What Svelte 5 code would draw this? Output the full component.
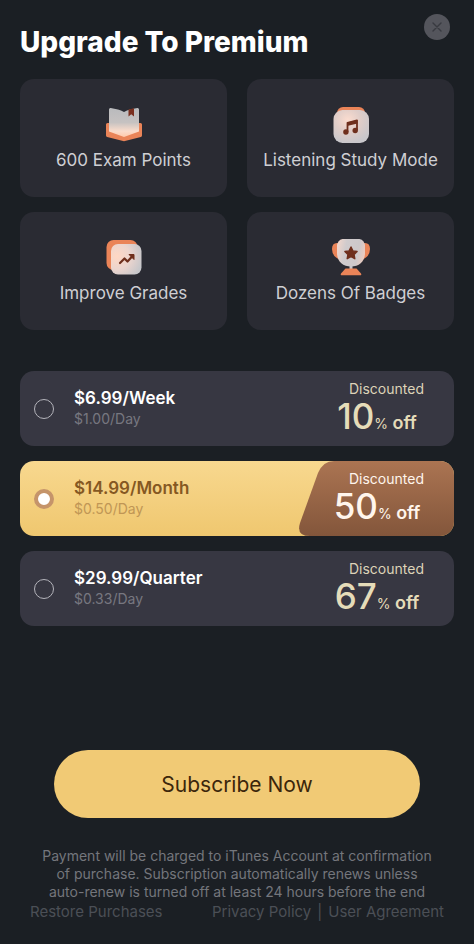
<script>
	const features = [
		{ icon: "book", label: "600 Exam Points" },
		{ icon: "music", label: "Listening Study Mode" },
		{ icon: "chart", label: "Improve Grades" },
		{ icon: "trophy", label: "Dozens Of Badges" },
	];

	const plans = [
		{ id: "week", price: "$6.99/Week", daily: "$1.00/Day", discount: 10 },
		{ id: "month", price: "$14.99/Month", daily: "$0.50/Day", discount: 50 },
		{ id: "quarter", price: "$29.99/Quarter", daily: "$0.33/Day", discount: 67 },
	];

	let selected = "month";
	let open = true;
</script>

{#if open}
	<main>
		<header>
			<h1>Upgrade To Premium</h1>
			<button class="close" type="button" aria-label="Close" on:click={() => (open = false)}>
				<svg viewBox="0 0 26 26" width="26" height="26">
					<path d="M9 9l8 8M17 9l-8 8" stroke="#393a41" stroke-width="1.4" stroke-linecap="round" />
				</svg>
			</button>
		</header>

		<ul class="features">
			{#each features as feature}
				<li>
					<svg class="icon" viewBox="0 0 40 40" aria-hidden="true">
						{#if feature.icon === "book"}
							<defs>
								<linearGradient id="page" x1="0" y1="0" x2="0" y2="1">
									<stop offset="0" stop-color="#b9babd" />
									<stop offset="0.5" stop-color="#c6c2c1" />
									<stop offset="0.8" stop-color="#fbdccb" />
									<stop offset="1" stop-color="#ffc9ab" />
								</linearGradient>
							</defs>
							<path d="M3.5 19h33q1.500 0 1.500 1.500v11q0 1.200-1.200 1.600L21 37q-1 .3-2 0L3.200 33.100Q2 32.700 2 31.500v-11Q2 19 3.500 19z" fill="#ea8458" />
							<path d="M5 5.500Q5 3.800 6.700 4l7.300 1.500q3 .6 6 2.500 3-1.900 6-2.500L33.300 4Q35 3.800 35 5.500V27.500L20 33 5 27.500z" fill="url(#page)" />
							<path d="M24.500 5.500L30 4.300V12.500l-2.800-2.200-2.700 2.200z" fill="#7a2f1f" />
						{:else if feature.icon === "music"}
							<defs>
								<radialGradient id="disc" cx="0.4" cy="0.3" r="0.7">
									<stop offset="0" stop-color="#fbdccf" />
									<stop offset="0.5" stop-color="#e0cdc8" />
									<stop offset="1" stop-color="#c9c7cb" />
								</radialGradient>
							</defs>
							<rect x="6" y="3" width="28" height="20" rx="6" fill="#ea8458" />
							<rect x="2.5" y="6" width="35.500" height="33" rx="9" fill="url(#disc)" />
							<path d="M16.500 28V18.800l9.500-2.400v9.900" fill="none" stroke="#6f2f1d" stroke-width="1.800" stroke-linejoin="round" />
							<path d="M16 18.500l10.500-2.600v3.600L16 22z" fill="#6f2f1d" />
							<circle cx="14.900" cy="28" r="2.700" fill="#6f2f1d" />
							<circle cx="24.200" cy="26.500" r="2.700" fill="#6f2f1d" />
						{:else if feature.icon === "chart"}
							<defs>
								<radialGradient id="tile" cx="0.2" cy="0.4" r="0.85">
									<stop offset="0" stop-color="#ffd7c4" />
									<stop offset="0.5" stop-color="#ecd5ce" />
									<stop offset="1" stop-color="#c6c6ca" />
								</radialGradient>
							</defs>
							<rect x="2.5" y="3" width="31" height="30" rx="7" fill="#ea8458" />
							<rect x="7" y="7" width="30.500" height="30.500" rx="7" fill="url(#tile)" />
							<path d="M16 26l4.500-4.500 3 3 5-5.500" fill="none" stroke="#6f2f1d" stroke-width="2.200" stroke-linecap="round" stroke-linejoin="round" />
							<path d="M25 17.500h5v5z" fill="#6f2f1d" stroke="#6f2f1d" stroke-linejoin="round" />
						{:else}
							<defs>
								<linearGradient id="cup" x1="0" y1="0.3" x2="1" y2="0.5">
									<stop offset="0" stop-color="#f0d5cb" />
									<stop offset="0.3" stop-color="#d0cbcd" />
									<stop offset="0.75" stop-color="#cdc8ca" />
									<stop offset="1" stop-color="#eccbbf" />
								</linearGradient>
							</defs>
							<path d="M8 6H6q-5 0-5 6 0 8 9 11M32 6h2q5 0 5 6 0 8-9 11" fill="#ea8458" />
							<path d="M18.500 28h3v4h-3z" fill="#c8c6ca" />
							<path d="M14.500 31.500h11l4.500 5q1 1.800-1 1.800H11q-2 0-1-1.800z" fill="#ea8458" />
							<path d="M11.500 2h17q2.500 0 4 2.500L34 7.500V16c0 8.500-6 13.500-14 13.500S6 24.500 6 16V7.500l1.500-3Q9 2 11.500 2z" fill="url(#cup)" />
							<path d="M20 10l1.900 3.900 4.200.6-3 3 .7 4.200-3.800-2-3.800 2 .7-4.200-3-3 4.200-.6z" fill="#6f2f1d" stroke="#6f2f1d" stroke-width="1.400" stroke-linejoin="round" />
						{/if}
					</svg>
					<span>{feature.label}</span>
				</li>
			{/each}
		</ul>

		<div class="plans" role="radiogroup" aria-label="Plans">
			{#each plans as plan}
				<label class="plan" class:active={selected === plan.id}>
					<input type="radio" name="plan" value={plan.id} bind:group={selected} />
					<span class="cost">
						<strong>{plan.price}</strong>
						<small>{plan.daily}</small>
					</span>
					<span class="offer">
						{#if selected === plan.id}
							<svg viewBox="0 0 156 75" preserveAspectRatio="none" aria-hidden="true">
								<defs>
									<linearGradient id="copper" x1="0" y1="0" x2="0" y2="1">
										<stop offset="0" stop-color="#ab7452" />
										<stop offset="1" stop-color="#83563b" />
									</linearGradient>
								</defs>
								<path d="M36 0H156V75H12Q-2 75 2 62L20 12Q25 0 36 0z" fill="url(#copper)" />
							</svg>
						{/if}
						<span class="caption">Discounted</span>
						<span class="amount"><b>{plan.discount}</b><i>%</i> <em>off</em></span>
					</span>
				</label>
			{/each}
		</div>

		<button class="subscribe" type="button">Subscribe Now</button>

		<p>
			Payment will be charged to iTunes Account at confirmation of purchase. Subscription
			automatically renews unless <span class="term">auto-renew</span> is turned off at least 24
			hours before the end
		</p>

		<footer>
			<a href="#restore">Restore Purchases</a>
			<nav>
				<a href="#privacy">Privacy Policy</a>
				<span>|</span>
				<a href="#agreement">User Agreement</a>
			</nav>
		</footer>
	</main>
{/if}

<style>
	:global(body) {
		background: #1b1f24;
	}
	main {
		box-sizing: border-box;
		min-height: 100vh;
		padding: 14px 20px 20px;
		font-family: Inter, "Liberation Sans", sans-serif;
		color: #fff;
	}
	header {
		display: flex;
		justify-content: space-between;
		align-items: flex-start;
		height: 65px;
	}
	h1 {
		margin: 10px 0 0;
		font-size: 28px;
		line-height: 36px;
		font-weight: 800;
	}
	button {
		border: 0;
		padding: 0;
		font-family: inherit;
		cursor: pointer;
	}
	.close {
		width: 26px;
		height: 26px;
		margin-right: 4px;
		border-radius: 50%;
		background: #54555c;
	}
	.close svg {
		display: block;
	}
	.features {
		display: grid;
		grid-template-columns: 1fr 1fr;
		gap: 15px 20px;
		margin: 0;
		padding: 0;
		list-style: none;
	}
	.features li {
		display: flex;
		flex-direction: column;
		align-items: center;
		box-sizing: border-box;
		height: 118px;
		padding-top: 25px;
		border-radius: 14px;
		background: #2a2b33;
		color: #cfcfd3;
		font-size: 17px;
		line-height: 22px;
		white-space: nowrap;
	}
	.icon {
		width: 40px;
		height: 40px;
		margin-bottom: 5px;
	}
	.plans {
		display: flex;
		flex-direction: column;
		gap: 15px;
		margin-top: 41px;
	}
	.plan {
		display: flex;
		align-items: center;
		height: 75px;
		border-radius: 14px;
		overflow: hidden;
		background: #373742;
		cursor: pointer;
	}
	.plan.active {
		background: linear-gradient(#f8d88f, #efc76f);
	}
	input {
		appearance: none;
		box-sizing: border-box;
		width: 20px;
		height: 20px;
		margin: 0 20px 0 14px;
		border: 1px solid #b4b4bb;
		border-radius: 50%;
	}
	input:checked {
		border: 4px solid #c5946a;
		background: #fff;
	}
	.cost {
		display: flex;
		flex-direction: column;
		flex: 1;
		padding-bottom: 2px;
	}
	strong {
		font-size: 17px;
		line-height: 22px;
		font-weight: 600;
	}
	small {
		font-size: 14px;
		line-height: 20px;
		color: #777780;
	}
	.active strong {
		color: #855822;
	}
	.active small {
		color: #c09655;
	}
	.offer {
		position: relative;
		display: flex;
		flex-direction: column;
		box-sizing: border-box;
		width: 156px;
		height: 75px;
		padding: 9px 30px 0 32px;
		color: #e5dcb9;
	}
	.offer svg {
		position: absolute;
		top: 0;
		left: 0;
		width: 100%;
		height: 100%;
	}
	.caption {
		position: relative;
		font-size: 14px;
		line-height: 18px;
		text-align: right;
		color: #ddd3b8;
	}
	.amount {
		position: relative;
		line-height: 36px;
		text-align: center;
		white-space: nowrap;
	}
	.active .offer,
	.active .caption {
		color: #fff5ec;
	}
	b {
		font-size: 35px;
		font-weight: 500;
	}
	i {
		font-size: 14px;
		font-style: normal;
	}
	em {
		font-size: 18px;
		font-style: normal;
		font-weight: 600;
	}
	.subscribe {
		display: block;
		width: calc(100% - 68px);
		height: 68px;
		margin: 124px auto 0;
		border-radius: 34px;
		background: #f1ca75;
		color: #3b260b;
		font-size: 21px;
	}
	p {
		margin: 29px 14px 0;
		color: #74767c;
		font-size: 14px;
		line-height: 18px;
		text-align: center;
	}
	.term {
		white-space: nowrap;
	}
	footer {
		display: flex;
		justify-content: space-between;
		margin: 2px 10px 0;
		font-size: 15px;
		line-height: 18px;
		color: #4b4f56;
	}
	nav {
		display: flex;
		gap: 6px;
	}
	a {
		color: inherit;
		text-decoration: none;
	}
</style>
